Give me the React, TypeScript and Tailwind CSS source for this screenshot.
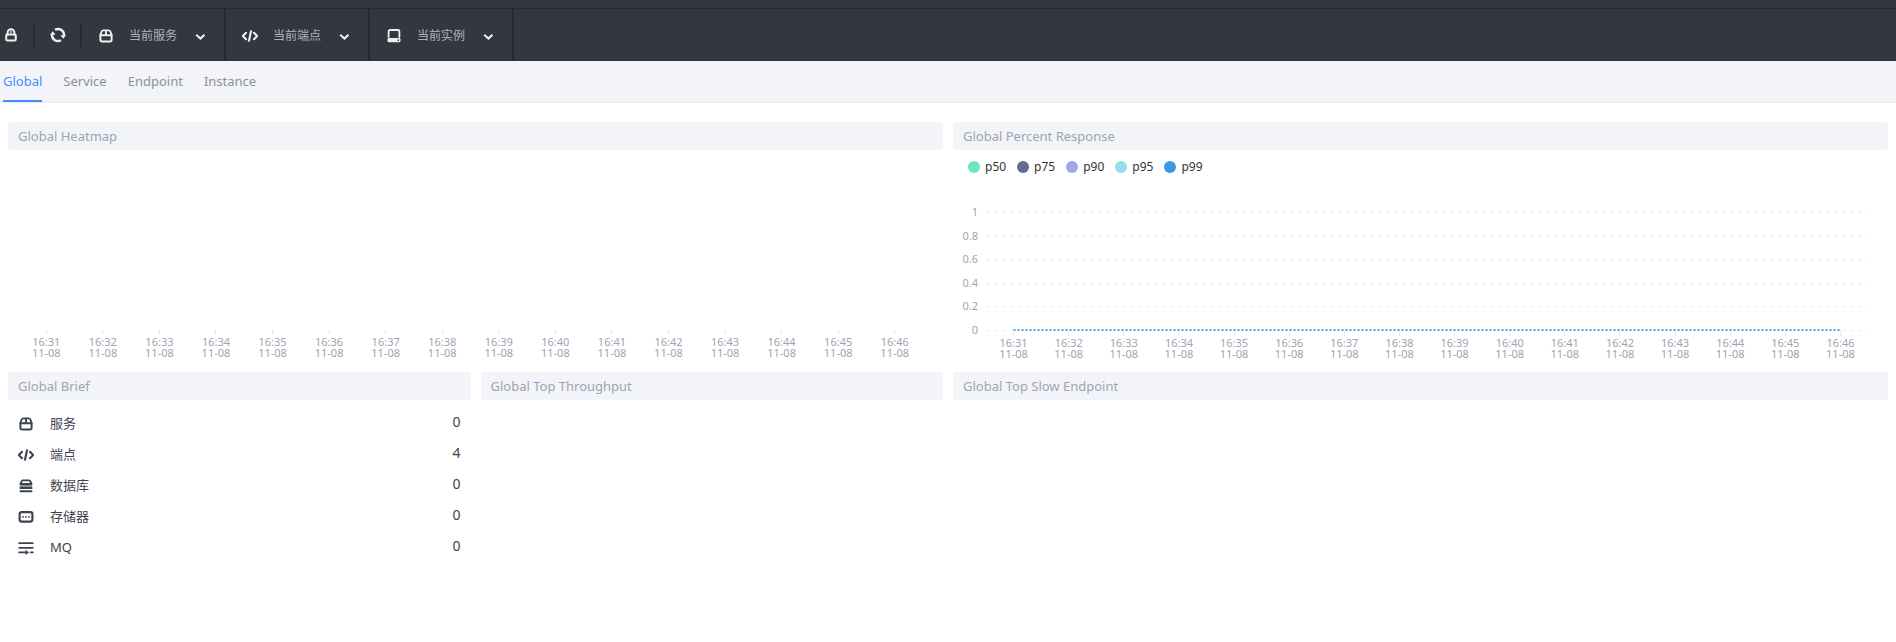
import React, { useState } from 'react';

const times = Array.from({ length: 16 }, (_, i) => `16:${31 + i}`);
const date = '11-08';

const tabs = ['Global', 'Service', 'Endpoint', 'Instance'];

const legend = [
  { name: 'p50', color: 'bg-[#6be6c1]' },
  { name: 'p75', color: 'bg-[#626c91]' },
  { name: 'p90', color: 'bg-[#a0a7e6]' },
  { name: 'p95', color: 'bg-[#96dee8]' },
  { name: 'p99', color: 'bg-[#3f96e3]' },
];

const yLabels = ['1', '0.8', '0.6', '0.4', '0.2', '0'];

const Icon: React.FC<{ children: React.ReactNode }> = ({ children }) => (
  <svg
    className="size-4 shrink-0"
    viewBox="0 0 16 16"
    fill="none"
    stroke="currentColor"
    strokeWidth="2"
    strokeLinecap="round"
    strokeLinejoin="round"
    aria-hidden="true"
  >
    {children}
  </svg>
);

const LockIcon = () => (
  <Icon>
    <path d="M4.6 7.4V5.6a3.4 3.4 0 0 1 6.8 0v1.8" />
    <path d="M8 4v1.6" strokeWidth="1.4" />
    <rect x="3.2" y="7.6" width="9.6" height="5.8" rx="1.2" />
  </Icon>
);

const ReloadIcon = () => (
  <Icon>
    <path d="M5 2.8A6 6 0 0 1 13.9 9M11 13.2A6 6 0 0 1 2.1 7" strokeWidth="2.4" strokeLinecap="butt" />
    <path d="M10.4 8.2H16L13.2 11.8zM0 7.8h5.6L2.8 4.2z" fill="currentColor" stroke="none" />
  </Icon>
);

const PackageIcon = () => (
  <Icon>
    <path d="M2.4 7.2v4.8a1.4 1.4 0 0 0 1.4 1.4h8.4a1.4 1.4 0 0 0 1.4-1.4V7.2z" />
    <path d="M2.4 7l1-3A2 2 0 0 1 5.2 2.4h5.6A2 2 0 0 1 12.6 4l1 3M8 2.4V7" strokeWidth="1.9" />
  </Icon>
);

const CodeIcon = () => (
  <Icon>
    <path d="M4 4.8L.8 8 4 11.2M12 4.8L15.2 8 12 11.2M9 3.2L7 12.8" strokeWidth="2.1" />
  </Icon>
);

const DiskIcon = () => (
  <Icon>
    <path d="M2.6 9V3.4A1.4 1.4 0 0 1 4 2h8a1.4 1.4 0 0 1 1.4 1.4V9" strokeWidth="1.8" />
    <path
      d="M3 10h10a1.6 1.6 0 0 1 1.6 1.6v1A1.6 1.6 0 0 1 13 14.2H3a1.6 1.6 0 0 1-1.6-1.6v-1A1.6 1.6 0 0 1 3 10zM11.6 11.6V13H13v-1.4z"
      fill="currentColor"
      fillRule="evenodd"
      stroke="none"
    />
  </Icon>
);

const DatabaseIcon = () => (
  <Icon>
    <path d="M2.4 6l1.2-2.6A1.4 1.4 0 0 1 4.8 2.4h6.4a1.4 1.4 0 0 1 1.2 1L13.6 6z" strokeWidth="1.8" />
    <path d="M1.8 7h12.4v2.2H1.8z" fill="currentColor" stroke="none" opacity="0.6" />
    <path d="M2.4 10h11.2M2.4 13.2h11.2" strokeWidth="1.9" />
  </Icon>
);

const CacheIcon = () => (
  <Icon>
    <rect x="1.6" y="3.2" width="12.8" height="9.4" rx="2" strokeWidth="2.2" />
    <path d="M5 7.9h.01M8 7.9h.01M11 7.9h.01" strokeWidth="1.8" />
  </Icon>
);

const QueueIcon = () => (
  <Icon>
    <path d="M1.2 3.2h13.6M1.2 7.8h13.6M1.2 12.4h6.8M12.8 12.4h2" strokeWidth="1.8" />
    <path d="M7.6 9.8v5.2l3.4-2.6z" fill="currentColor" stroke="none" />
  </Icon>
);

const ChevronIcon = () => (
  <Icon>
    <path d="M5 7.4l3.4 3.2 3.4-3.2" strokeLinecap="square" strokeLinejoin="miter" />
  </Icon>
);

const selectors = [
  { label: '当前服务', icon: <PackageIcon /> },
  { label: '当前端点', icon: <CodeIcon /> },
  { label: '当前实例', icon: <DiskIcon /> },
];

const brief = [
  { label: '服务', value: 0, icon: <PackageIcon /> },
  { label: '端点', value: 4, icon: <CodeIcon /> },
  { label: '数据库', value: 0, icon: <DatabaseIcon /> },
  { label: '存储器', value: 0, icon: <CacheIcon /> },
  { label: 'MQ', value: 0, icon: <QueueIcon /> },
];

const Panel: React.FC<{ title: string; className?: string; children?: React.ReactNode }> = ({
  title,
  className = '',
  children,
}) => (
  <section className={className}>
    <h2 className="h-7 truncate rounded-xs bg-[#f3f4f9] px-2.5 text-[13px]/7 text-[#9da5b2]">{title}</h2>
    {children}
  </section>
);

const TimeAxis = () => (
  <div className="grid grid-cols-16 text-center text-[11px]/[11px] text-[#9da5b2]">
    {times.map(t => (
      <div key={t}>
        <div className="mx-auto mb-px h-[5px] w-px bg-[#e8e8e8]" />
        <p>
          {t}
          <br />
          {date}
        </p>
      </div>
    ))}
  </div>
);

const PercentChart = () => {
  const half = 100 / times.length / 2;
  return (
    <div className="flex pr-5">
      <div className="flex h-[129px] w-[33px] shrink-0 flex-col justify-between pr-2 text-right text-[11px]/[11px] text-[#9da5b2]">
        {yLabels.map(y => (
          <span key={y}>{y}</span>
        ))}
      </div>
      <div className="min-w-0 flex-1 pt-1.5">
        <svg className="block h-[119px] w-full" aria-hidden="true">
          {[0.5, 23.5, 47.5, 71.5, 94.5, 118.5].map(y => (
            <line key={y} x1="0" x2="100%" y1={y} y2={y} stroke="#eee" strokeDasharray="4 4" />
          ))}
          <line
            x1={`${half}%`}
            x2={`${100 - half}%`}
            y1="118"
            y2="118"
            stroke="#55a5e0"
            strokeWidth="2"
            strokeDasharray="2 2"
          />
        </svg>
        <TimeAxis />
      </div>
    </div>
  );
};

const App: React.FC = () => {
  const [active, setActive] = useState('Global');

  return (
    <div className="min-h-screen bg-white font-['Noto_Sans','Noto_Sans_CJK_SC',sans-serif] text-[#3d444f]">
      <header className="border-t-8 border-[#333840] bg-[#333840] text-[#efefef]">
        <div className="flex h-[53px] items-stretch border-t border-[#252a2f]">
          <div className="flex items-center">
            <button type="button" aria-label="Lock" className="flex h-[23px] w-[35px] items-center border-r-2 border-[#252a2f] pl-[3px]">
              <LockIcon />
            </button>
            <button type="button" aria-label="Reload" className="flex h-[23px] w-[47px] items-center justify-center border-r-2 border-[#252a2f]">
              <ReloadIcon />
            </button>
          </div>
          {selectors.map(s => (
            <button key={s.label} type="button" className="flex w-36 items-center border-r-2 border-[#252a2f] px-4 pt-0.5">
              {s.icon}
              <span className="ml-[15px] text-xs text-[#adb3be]">{s.label}</span>
              <span className="ml-auto">
                <ChevronIcon />
              </span>
            </button>
          ))}
        </div>
      </header>

      <nav className="flex h-[42px] gap-[21px] border-b border-[#eaeaea] bg-[#f3f4f9] pl-[3px] text-[13px]">
        {tabs.map(t => (
          <button
            key={t}
            type="button"
            onClick={() => setActive(t)}
            className={
              t === active
                ? 'border-b-2 border-[#448dfe] pt-0.5 text-[#448dfe]'
                : 'border-b-2 border-transparent pt-0.5 text-[#8a919e]'
            }
          >
            {t}
          </button>
        ))}
      </nav>

      <main className="grid grid-cols-4 gap-2.5 px-2 pt-[19px]">
        <Panel title="Global Heatmap" className="col-span-2 h-60">
          <div className="pt-[180px] pr-5 pl-2.5">
            <TimeAxis />
          </div>
        </Panel>

        <Panel title="Global Percent Response" className="col-span-2 h-60">
          <ul className="flex gap-[11px] px-[15px] pt-[9px] pb-[31px] text-xs/4 text-[#333]">
            {legend.map(l => (
              <li key={l.name} className="flex items-center gap-[5px]">
                <span className={`size-3 rounded-full ${l.color}`} />
                {l.name}
              </li>
            ))}
          </ul>
          <PercentChart />
        </Panel>

        <Panel title="Global Brief">
          <dl className="px-2.5 pt-2">
            {brief.map(b => (
              <div key={b.label} className="flex h-[31px] items-center">
                {b.icon}
                <dt className="ml-4 text-[13px]">{b.label}</dt>
                <dd className="ml-auto pb-1 text-sm">{b.value}</dd>
              </div>
            ))}
          </dl>
        </Panel>

        <Panel title="Global Top Throughput" />
        <Panel title="Global Top Slow Endpoint" className="col-span-2" />
      </main>
    </div>
  );
};

export default App;
